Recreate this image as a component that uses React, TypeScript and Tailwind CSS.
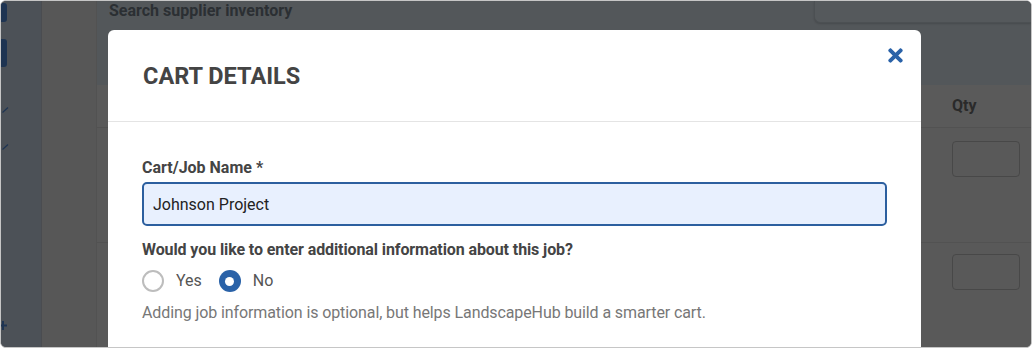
import React from 'react';
import { FaTimes } from 'react-icons/fa';

const Radio: React.FC<{ checked?: boolean; label: string }> = ({ checked, label }) => (
    <label className="flex items-center gap-[12px]">
        {checked ? (
            <span className="flex h-[22px] w-[22px] items-center justify-center rounded-full bg-[#2a62a8]">
                <span className="h-[9px] w-[9px] rounded-full bg-white"></span>
            </span>
        ) : (
            <span className="h-[22px] w-[22px] rounded-full border-2 border-[#bdbdbd] bg-white"></span>
        )}
        <span className="text-[16px] leading-[24px] text-[#555]">{label}</span>
    </label>
);

const Check: React.FC = () => (
    <svg width="7" height="6" viewBox="0 0 7 6" className="block">
        <path d="M0.5 5.5 L6 0.5" stroke="#1e3452" strokeWidth="1.2" fill="none" />
    </svg>
);

const Plus: React.FC = () => (
    <svg width="6" height="9" viewBox="0 0 6 9" className="block">
        <path d="M0 4.5 H6 M2 0 V9" stroke="#1e3452" strokeWidth="2" fill="none" />
    </svg>
);

export default function App() {
    return (
        <div className="relative h-[348px] w-[1032px] overflow-hidden rounded-[6px] border border-[#c6c6c6] bg-[#575757] font-['Roboto',sans-serif]">
            {/* page underneath the overlay */}
            <div className="flex h-full">
                <aside className="flex w-[41px] shrink-0 flex-col border-r border-[#4a4c50] bg-[#4c5157]">
                    <div className="mt-[2px] h-[19px] w-[6px] rounded-r-[3px] bg-[#1e3452]"></div>
                    <div className="mt-[17px] h-[28px] w-[6px] rounded-r-[3px] bg-[#1e3452]"></div>
                    <div className="mt-[40px] pl-[1px]"><Check /></div>
                    <div className="mt-[31px] pl-[1px]"><Check /></div>
                    <div className="mt-auto mb-[17px]"><Plus /></div>
                </aside>
                <div className="w-[55px] shrink-0 border-r border-[#525252] bg-[#575757]"></div>
                <main className="flex min-w-0 flex-1 flex-col">
                    <div className="flex h-[84px] items-start justify-between bg-[#53575a]">
                        <div className="pl-[12px] text-[16px] font-bold leading-[20px] text-[#2b2f33]">Search supplier inventory</div>
                        <div className="h-[22px] w-[217px] rounded-bl-[6px] border-b border-l border-[#4c5053] bg-[#55595c] shadow-[0_1px_2px_rgba(0,0,0,0.15)]"></div>
                    </div>
                    <div className="flex h-[43px] items-center border-b border-[#525252] bg-[#5a5a5a]">
                        <div className="flex-1"></div>
                        <div className="w-[79px] text-[16px] font-bold text-[#2a2a2a]">Qty</div>
                    </div>
                    <div className="flex h-[115px] items-start border-b border-[#525252] bg-[#595959] pt-[13px]">
                        <div className="flex-1"></div>
                        <div className="mr-[11px] h-[36px] w-[68px] rounded-[4px] border border-[#484848]"></div>
                    </div>
                    <div className="flex flex-1 items-start bg-[#595959] pt-[11px]">
                        <div className="flex-1"></div>
                        <div className="mr-[11px] h-[36px] w-[68px] rounded-[4px] border border-[#484848]"></div>
                    </div>
                </main>
            </div>

            {/* modal */}
            <div className="absolute bottom-0 left-[107px] top-[29px] w-[813px] rounded-t-[6px] bg-white">
                <div className="relative border-b border-[#e4e4e4] px-[35px] pb-[29px] pt-[30px]">
                    <h2 className="text-[23.5px] font-bold leading-[32px] text-[#444]">CART DETAILS</h2>
                    <button className="absolute right-[15px] top-[15px] text-[#2a62a8]">
                        <FaTimes size={21} />
                    </button>
                </div>
                <div className="px-[34px] pt-[34px]">
                    <label className="mb-[2px] block text-[16px] font-bold leading-[24px] text-[#444]">Cart/Job Name *</label>
                    <input
                        readOnly
                        value="Johnson Project"
                        className="block h-[44px] w-full rounded-[5px] border-2 border-[#2c5f9f] bg-[#e8f0fe] px-[9px] text-[16px] text-[#222] outline-none"
                    />
                    <p className="mt-[12px] text-[16px] font-bold leading-[24px] tracking-[-0.1px] text-[#444]">Would you like to enter additional information about this job?</p>
                    <div className="mt-[7px] flex items-center gap-[17px]">
                        <Radio label="Yes" />
                        <Radio label="No" checked />
                    </div>
                    <p className="mt-[8px] text-[16px] leading-[24px] tracking-[-0.1px] text-[#777]">Adding job information is optional, but helps LandscapeHub build a smarter cart.</p>
                </div>
            </div>
        </div>
    );
}
